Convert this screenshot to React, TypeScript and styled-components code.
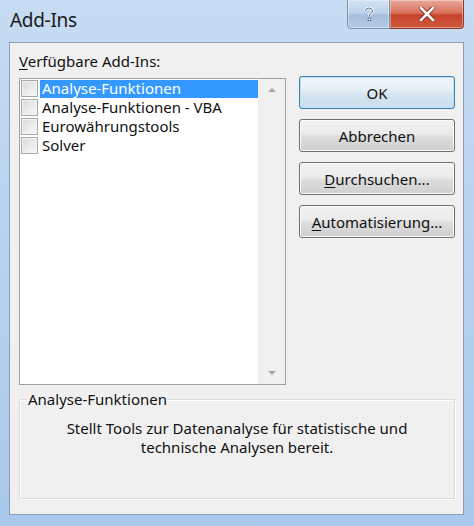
import React from 'react';
import styled, { createGlobalStyle } from 'styled-components';

const GlobalStyle = createGlobalStyle`
  html, body {
    margin: 0;
    padding: 0;
  }
  body {
    font-family: "Noto Sans", "Open Sans", sans-serif;
  }
`;

const Window = styled.div`
  width: 474px;
  height: 526px;
  box-sizing: border-box;
  display: flex;
  flex-direction: column;
  background: linear-gradient(180deg, #c7dcf2 0%, #b9d3ef 40%, #a9c9ec 100%);
  overflow: hidden;
`;

const TitleBar = styled.div`
  height: 42px;
  display: flex;
  justify-content: space-between;
  align-items: flex-start;
  padding-left: 10px;
  padding-right: 10px;
  flex-shrink: 0;
`;

const Title = styled.div`
  font-size: 19px;
  color: #1a1a1a;
  margin-top: 7px;
  letter-spacing: -0.3px;
`;

const CaptionButtons = styled.div`
  display: flex;
  margin-top: -1px;
`;

const CaptionButton = styled.div<{ kind: 'help' | 'close' }>`
  height: 30px;
  width: ${p => (p.kind === 'help' ? '43px' : '74px')};
  box-sizing: border-box;
  display: flex;
  align-items: center;
  justify-content: center;
  border: 1px solid ${p => (p.kind === 'help' ? '#7d93ad' : '#8c3a2a')};
  border-left-width: ${p => (p.kind === 'close' ? '0' : '1px')};
  border-radius: ${p => (p.kind === 'help' ? '0 0 0 4px' : '0 0 4px 0')};
  background: ${p =>
    p.kind === 'help'
      ? 'linear-gradient(180deg, #d3e2f2 0%, #bdd1e8 45%, #a6bfdc 55%, #b3cae4 100%)'
      : 'linear-gradient(180deg, #e9a99b 0%, #d9715c 45%, #c7432a 55%, #d05a3e 100%)'};
  box-shadow: inset 0 0 0 1px rgba(255, 255, 255, 0.35);
`;

const Client = styled.div`
  margin: 0 10px 0 9px;
  height: 473px;
  box-sizing: border-box;
  background: #f0f0f0;
  border: 1px solid #8d9eb4;
  padding: 7px 8px 0 9px;
  display: flex;
  flex-direction: column;
`;

const TopRow = styled.div`
  display: flex;
  justify-content: space-between;
`;

const LeftColumn = styled.div`
  display: flex;
  flex-direction: column;
  width: 267px;
`;

const Label = styled.div`
  font-size: 15px;
  color: #111;
  height: 28px;
  line-height: 22px;
`;

const Underline = styled.span`
  text-decoration: underline;
  text-underline-offset: 2px;
`;

const ListBox = styled.div`
  height: 307px;
  box-sizing: border-box;
  border: 1px solid #a0a0a0;
  background: #fff;
  display: flex;
`;

const Items = styled.div`
  flex: 1;
`;

const Item = styled.div`
  display: flex;
  align-items: center;
  height: 19px;
  font-size: 15px;
  color: #111;
`;

const CheckBox = styled.span`
  width: 17px;
  height: 17px;
  box-sizing: border-box;
  margin: 0 2px 0 1px;
  border: 1px solid #a9a9a9;
  background: linear-gradient(135deg, #d8d8d8 0%, #ededed 60%, #f6f6f6 100%);
  box-shadow: inset 0 0 0 1px #f4f4f4;
  flex-shrink: 0;
`;

const ItemText = styled.span<{ selected?: boolean }>`
  flex: 1;
  height: 18px;
  line-height: 17px;
  padding-left: 2px;
  background: ${p => (p.selected ? '#3399ff' : 'transparent')};
  color: ${p => (p.selected ? '#fff' : '#111')};
  white-space: nowrap;
`;

const ScrollBar = styled.div`
  width: 26px;
  background: #f0f0f0;
  border-left: 1px solid #ececec;
  display: flex;
  flex-direction: column;
  justify-content: space-between;
  align-items: center;
  padding: 8px 0 8px;
`;

const ButtonColumn = styled.div`
  width: 156px;
  display: flex;
  flex-direction: column;
  gap: 10px;
  padding-top: 26px;
`;

const Button = styled.div<{ primary?: boolean }>`
  height: 33px;
  box-sizing: border-box;
  border: 1px solid ${p => (p.primary ? '#3c7fb1' : '#707070')};
  border-radius: 3px;
  background: ${p =>
    p.primary
      ? 'linear-gradient(180deg, #eef5fa 0%, #e4eef6 45%, #d5e4f0 55%, #cbdeec 100%)'
      : 'linear-gradient(180deg, #f2f2f2 0%, #ebebeb 45%, #dddddd 55%, #cfcfcf 100%)'};
  box-shadow: inset 0 0 0 1px ${p => (p.primary ? '#bfe0f5' : '#fbfbfb')};
  display: flex;
  align-items: center;
  justify-content: center;
  font-size: 15px;
  color: #111;
`;

const GroupBox = styled.fieldset`
  margin: 5px 0 0 0;
  padding: 0;
  height: 109px;
  box-sizing: border-box;
  border: 1px solid #dcdcdc;
  box-shadow: 1px 1px 0 #fff, inset 1px 1px 0 #fff;
  display: flex;
  flex-direction: column;
`;

const Legend = styled.legend`
  font-size: 15px;
  color: #111;
  padding: 0 1px;
  margin-left: 7px;
  line-height: 18px;
`;

const Description = styled.div`
  font-size: 15px;
  color: #111;
  text-align: center;
  line-height: 19px;
  padding: 11px 20px 0;
`;

const Arrow = ({ up }: { up?: boolean }) => (
  <svg width="8" height="5" viewBox="0 0 8 5">
    <path d={up ? 'M0 5 L4 1 L8 5 Z' : 'M0 0 L4 4 L8 0 Z'} fill="#a6a6a6" />
  </svg>
);

const addIns = [
  'Analyse-Funktionen',
  'Analyse-Funktionen - VBA',
  'Eurowährungstools',
  'Solver',
];

export default function App() {
  return (
    <>
      <GlobalStyle />
      <Window>
        <TitleBar>
          <Title>Add-Ins</Title>
          <CaptionButtons>
            <CaptionButton kind="help">
              <svg width="12" height="16" viewBox="0 0 12 16">
                <path
                  d="M2.5 5 Q2.5 2 6 2 Q9.5 2 9.5 5 Q9.5 7 6.5 8.5 L6.5 10.5"
                  fill="none"
                  stroke="#fff"
                  strokeWidth="2.4"
                />
                <path
                  d="M2.5 5 Q2.5 2 6 2 Q9.5 2 9.5 5 Q9.5 7 6.5 8.5 L6.5 10.5"
                  fill="none"
                  stroke="#4f6e92"
                  strokeWidth="1"
                />
                <rect x="5.2" y="12" width="2.6" height="2.6" fill="#fff" stroke="#4f6e92" strokeWidth="0.8" />
              </svg>
            </CaptionButton>
            <CaptionButton kind="close">
              <svg width="16" height="14" viewBox="0 0 16 14">
                <path d="M2 1 L14 13 M14 1 L2 13" stroke="#6d2417" strokeWidth="4.2" strokeLinecap="square" />
                <path d="M2 1 L14 13 M14 1 L2 13" stroke="#fff" strokeWidth="2.6" strokeLinecap="square" />
              </svg>
            </CaptionButton>
          </CaptionButtons>
        </TitleBar>
        <Client>
          <TopRow>
            <LeftColumn>
              <Label>
                <Underline>V</Underline>erfügbare Add-Ins:
              </Label>
              <ListBox>
                <Items>
                  {addIns.map((name, i) => (
                    <Item key={name}>
                      <CheckBox />
                      <ItemText selected={i === 0}>{name}</ItemText>
                    </Item>
                  ))}
                </Items>
                <ScrollBar>
                  <Arrow up />
                  <Arrow />
                </ScrollBar>
              </ListBox>
            </LeftColumn>
            <ButtonColumn>
              <Button primary>OK</Button>
              <Button>Abbrechen</Button>
              <Button>
                <span>
                  <Underline>D</Underline>urchsuchen...
                </span>
              </Button>
              <Button>
                <span>
                  <Underline>A</Underline>utomatisierung...
                </span>
              </Button>
            </ButtonColumn>
          </TopRow>
          <GroupBox>
            <Legend>Analyse-Funktionen</Legend>
            <Description>
              Stellt Tools zur Datenanalyse für statistische und
              <br />
              technische Analysen bereit.
            </Description>
          </GroupBox>
        </Client>
      </Window>
    </>
  );
}
